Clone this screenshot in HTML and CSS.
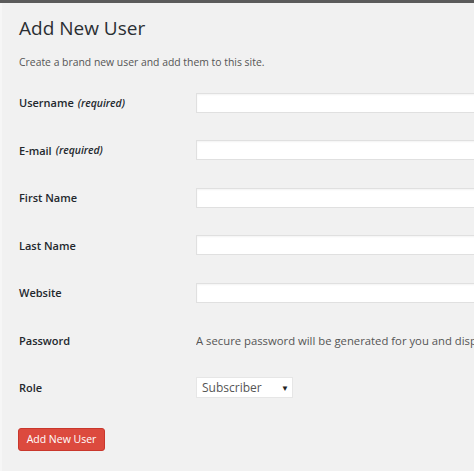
FILE: index.html
```html
<!DOCTYPE html>
<html lang="en">
<head>
    <meta charset="UTF-8">
    <meta name="viewport" content="width=device-width, initial-scale=1.0">
    <title>Add New User</title>
    <link rel="stylesheet" href="styles.css">
</head>
<body>

    <div class="topbar"></div>
    <div class="wrap">
        <h1>Add New User</h1>
        <p class="intro">Create a brand new user and add them to this site.</p>

        <form class="user-form" onsubmit="return false">
            <label class="field-label" for="user_login">Username <em>(required)</em></label>
            <div class="field"><input type="text" id="user_login"></div>

            <label class="field-label" for="email">E-mail <em>(required)</em></label>
            <div class="field"><input type="text" id="email"></div>

            <label class="field-label" for="first_name">First Name</label>
            <div class="field"><input type="text" id="first_name"></div>

            <label class="field-label" for="last_name">Last Name</label>
            <div class="field"><input type="text" id="last_name"></div>

            <label class="field-label" for="url">Website</label>
            <div class="field"><input type="text" id="url"></div>

            <div class="field-label">Password</div>
            <div class="field"><span class="note">A secure password will be generated for you and displayed after the user is created.</span></div>

            <label class="field-label">Role</label>
            <div class="field">
                <div class="select">
                    <span>Subscriber</span>
                    <span class="caret">&#9660;</span>
                </div>
            </div>
        </form>

        <button class="btn-primary">Add New User</button>
    </div>

</body>
</html>
```

FILE: styles.css
```css
html {
    background: #fff;
}

body {
    margin: 0;
    width: 474px;
    height: 474px;
    overflow: hidden;
    font-family: "Open Sans", "Liberation Sans", sans-serif;
    color: #23282d;
}

.topbar {
    height: 3px;
    background: #5b5b5b;
}

.wrap {
    height: 468px;
    box-sizing: border-box;
    padding: 11px 0 0 17px;
    background: #f1f1f1;
    border-left: 2px solid #f6f6f6;
    overflow: hidden;
}

h1 {
    margin: 0;
    font-size: 19px;
    line-height: 29px;
    font-weight: 400;
    color: #2b2f33;
}

.intro {
    margin: 11px 0 0;
    font-size: 10.4px;
    line-height: 16px;
    color: #555;
}

.user-form {
    display: grid;
    grid-template-columns: 177px 300px;
    grid-auto-rows: 47.5px;
    margin-top: 9px;
    width: 477px;
}

.field-label {
    display: flex;
    align-items: center;
    font-size: 11px;
    font-weight: 600;
    color: #23282d;
}

.field-label em {
    font-size: 10.4px;
    margin-left: 4px;
}

.field {
    display: flex;
    align-items: center;
    white-space: nowrap;
    overflow: hidden;
}

.field input {
    box-sizing: border-box;
    width: 300px;
    height: 20px;
    margin: 0;
    border: 1px solid #e0e0e0;
    background: #fff;
    box-shadow: inset 0 1px 2px rgba(0, 0, 0, 0.05);
}

.note {
    font-size: 11.3px;
    color: #555;
}

.select {
    box-sizing: border-box;
    display: flex;
    align-items: center;
    justify-content: space-between;
    width: 97px;
    height: 21px;
    padding: 0 3px 0 5px;
    background: #fff;
    border: 1px solid #e6e6e6;
    font-size: 12px;
    color: #555;
}

.caret {
    font-size: 8px;
    color: #222;
}

.btn-primary {
    display: block;
    margin: 16px 0 0 -1px;
    width: 87px;
    height: 23px;
    padding: 0;
    border: 1px solid #c9372c;
    border-radius: 3px;
    background: #dc4a3e;
    color: #fff;
    font-family: inherit;
    font-size: 10.5px;
    cursor: pointer;
}
```
